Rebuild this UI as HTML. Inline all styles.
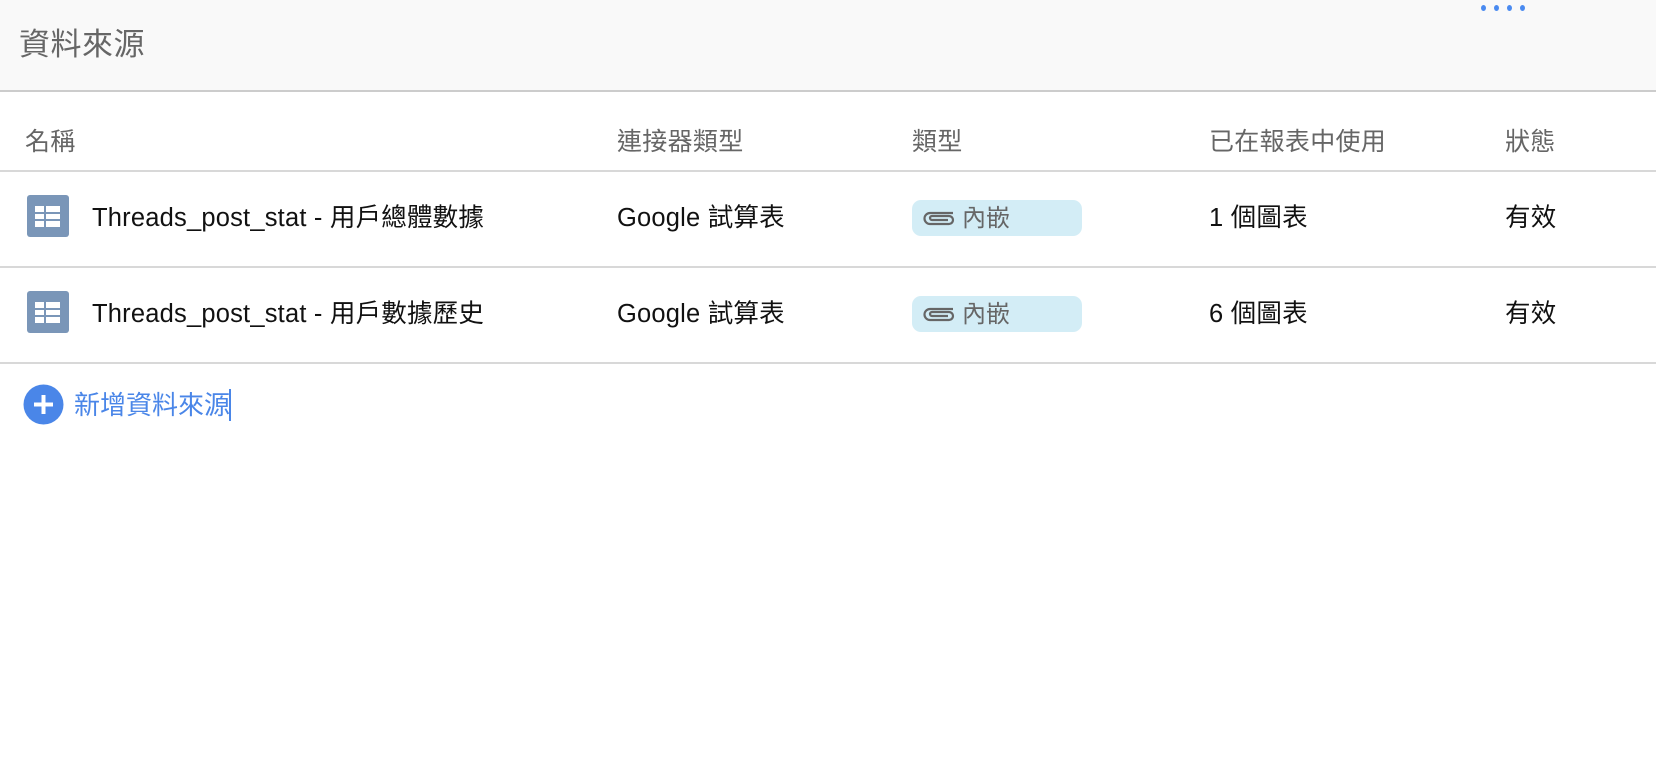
<!DOCTYPE html>
<html><head><meta charset="utf-8"><style>
*{margin:0;padding:0;box-sizing:border-box}
body{width:1656px;height:760px;background:#fff;font-family:"Liberation Sans","Noto Sans CJK TC",sans-serif;position:relative;overflow:hidden}
.hdr{position:absolute;left:0;top:0;width:1656px;height:92px;background:#f9f9f9;border-bottom:2px solid #ccc}
.t{position:absolute;white-space:nowrap;line-height:1}
.title{left:19px;top:29px;font-size:31px;color:#666;letter-spacing:0.5px}
.ch{font-size:25px;color:#666;top:130px;letter-spacing:0.3px}
.line{position:absolute;left:0;width:1656px;height:2px;background:#d8d8d8}
.cell{font-size:25.5px;color:#111;letter-spacing:0.2px}
.icon{position:absolute;left:27px;width:42px;height:42px;background:#7a96b8;border-radius:3px}
.icon i{position:absolute;left:8px;top:11px;width:25px;height:21px;background:#fff}
.icon b{position:absolute;background:#7a96b8}
.pill{position:absolute;left:912px;width:170px;height:36px;background:#d3edf6;border-radius:9px}
.pill span{position:absolute;left:50px;top:7px;font-size:24px;color:#666;line-height:1}
.dot{position:absolute;top:5px;width:5px;height:6px;border-radius:50%;background:#4a8af0}
</style></head><body>
<div class="hdr"></div>
<div class="t title">資料來源</div>
<div class="dot" style="left:1481px"></div><div class="dot" style="left:1494px"></div><div class="dot" style="left:1507px"></div><div class="dot" style="left:1520px"></div>

<div class="t ch" style="left:25px">名稱</div>
<div class="t ch" style="left:617px">連接器類型</div>
<div class="t ch" style="left:912px">類型</div>
<div class="t ch" style="left:1209px">已在報表中使用</div>
<div class="t ch" style="left:1505px">狀態</div>
<div class="line" style="top:170px"></div>

<!-- row 1 -->
<div class="icon" style="top:195px"><i></i><b style="left:8px;top:17px;width:25px;height:1.5px"></b><b style="left:8px;top:24px;width:25px;height:1.5px"></b><b style="left:17px;top:11px;width:1.5px;height:21px"></b></div>
<div class="t cell" style="left:92px;top:206px">Threads_post_stat - 用戶總體數據</div>
<div class="t cell" style="left:617px;top:206px">Google 試算表</div>
<div class="pill" style="top:200px"><svg style="position:absolute;left:9px;top:10px" width="34" height="16" viewBox="0 0 34 16"><path d="M32 3 H9 a5.5 5.5 0 0 0 0 11 H28 a4 4 0 0 0 0-8 H11 a2 2 0 0 0 0 4 H27" fill="none" stroke="#666" stroke-width="2.2"/></svg><span>內嵌</span></div>
<div class="t cell" style="left:1209px;top:206px">1 個圖表</div>
<div class="t cell" style="left:1505px;top:206px">有效</div>
<div class="line" style="top:266px"></div>

<!-- row 2 -->
<div class="icon" style="top:291px"><i></i><b style="left:8px;top:17px;width:25px;height:1.5px"></b><b style="left:8px;top:24px;width:25px;height:1.5px"></b><b style="left:17px;top:11px;width:1.5px;height:21px"></b></div>
<div class="t cell" style="left:92px;top:302px">Threads_post_stat - 用戶數據歷史</div>
<div class="t cell" style="left:617px;top:302px">Google 試算表</div>
<div class="pill" style="top:296px"><svg style="position:absolute;left:9px;top:10px" width="34" height="16" viewBox="0 0 34 16"><path d="M32 3 H9 a5.5 5.5 0 0 0 0 11 H28 a4 4 0 0 0 0-8 H11 a2 2 0 0 0 0 4 H27" fill="none" stroke="#666" stroke-width="2.2"/></svg><span>內嵌</span></div>
<div class="t cell" style="left:1209px;top:302px">6 個圖表</div>
<div class="t cell" style="left:1505px;top:302px">有效</div>
<div class="line" style="top:362px"></div>

<!-- add -->
<svg style="position:absolute;left:23px;top:384px" width="41" height="41" viewBox="0 0 41 41"><circle cx="20.5" cy="20.5" r="20" fill="#4a86e8"/><path d="M20.5 11v19M11 20.5h19" stroke="#fff" stroke-width="4"/></svg>
<div class="t" style="left:74px;top:392px;font-size:26px;color:#4a86e8">新增資料來源</div>
<div style="position:absolute;left:229px;top:389px;width:2px;height:32px;background:#4a86e8"></div>
</body></html>
